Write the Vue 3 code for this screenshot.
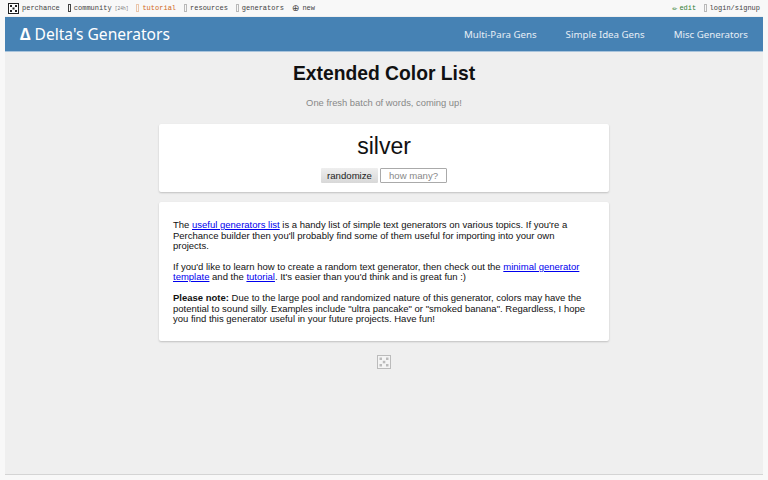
<script setup>
import { ref } from 'vue'

const leftLinks = [
  { text: 'community', extra: '[24h]', cls: 'strong' },
  { text: 'tutorial', cls: 'orange' },
  { text: 'resources' },
  { text: 'generators' }
]
const navLinks = ['Multi-Para Gens', 'Simple Idea Gens', 'Misc Generators']
const word = ref('silver')
</script>

<template>
  <div class="page">
    <div class="topbar">
      <div class="topbar__left">
        <a class="top-link top-link--logo">
          <svg class="logo" width="11" height="11" viewBox="0 0 11 11">
            <rect x="0.5" y="0.5" width="10" height="10" fill="#fff" stroke="#222" />
            <rect x="2" y="2" width="2" height="2" fill="#222" />
            <rect x="7" y="2" width="2" height="2" fill="#222" />
            <rect x="4.5" y="4.5" width="2" height="2" fill="#222" />
            <rect x="2" y="7" width="2" height="2" fill="#222" />
            <rect x="7" y="7" width="2" height="2" fill="#222" />
          </svg>
          perchance
        </a>
        <a v-for="link in leftLinks" :key="link.text" class="top-link" :class="link.cls">
          <span class="tofu"></span>{{ link.text }}
          <span v-if="link.extra" class="top-link__extra">{{ link.extra }}</span>
        </a>
        <a class="top-link"><span class="globe">⊕</span>new</a>
      </div>
      <div class="topbar__right">
        <a class="top-link green"><span class="pencil">✏</span>edit</a>
        <a class="top-link"><span class="tofu"></span>login/signup</a>
      </div>
    </div>

    <div class="frame">
      <nav class="nav">
        <a class="nav__brand"><b>Δ</b> Delta's Generators</a>
        <div class="nav__links">
          <a v-for="link in navLinks" :key="link">{{ link }}</a>
        </div>
      </nav>

      <h1 class="title">Extended Color List</h1>
      <p class="subtitle">One fresh batch of words, coming up!</p>

      <section class="card card--result">
        <div class="word">{{ word }}</div>
        <div class="controls">
          <button class="btn">randomize</button>
          <input class="count" placeholder="how many?">
        </div>
      </section>

      <section class="card card--text">
        <p>The <a href="#">useful generators list</a> is a handy list of simple text generators on various topics. If you're a Perchance builder then you'll probably find some of them useful for importing into your own projects.</p>
        <p>If you'd like to learn how to create a random text generator, then check out the <a href="#">minimal generator template</a> and the <a href="#">tutorial</a>. It's easier than you'd think and is great fun :)</p>
        <p><b>Please note:</b> Due to the large pool and randomized nature of this generator, colors may have the potential to sound silly. Examples include "ultra pancake" or "smoked banana". Regardless, I hope you find this generator useful in your future projects. Have fun!</p>
      </section>

      <svg class="dice" width="14" height="14" viewBox="0 0 14 14">
        <rect x="0.5" y="0.5" width="13" height="13" fill="#f4f4f4" stroke="#bbb" />
        <rect x="2.5" y="2.5" width="2.5" height="2.5" fill="#bbb" />
        <rect x="9" y="2.5" width="2.5" height="2.5" fill="#bbb" />
        <rect x="5.8" y="5.8" width="2.5" height="2.5" fill="#bbb" />
        <rect x="2.5" y="9" width="2.5" height="2.5" fill="#bbb" />
        <rect x="9" y="9" width="2.5" height="2.5" fill="#bbb" />
      </svg>
    </div>
  </div>
</template>

<style>
html, body {
  margin: 0;
  background: #f8f8f8;
}
</style>

<style scoped>
.page {
  height: 480px;
  overflow: hidden;
  background: #f8f8f8;
  font-family: "Liberation Sans", Arial, sans-serif;
}

.topbar {
  height: 16px;
  display: flex;
  justify-content: space-between;
  align-items: center;
  padding: 0 8px;
  font-family: "Liberation Mono", monospace;
  font-size: 7px;
  color: #444;
}

.topbar__left, .topbar__right {
  display: flex;
  align-items: center;
  gap: 8px;
}

.topbar__right {
  gap: 7.4px;
}

.top-link {
  display: flex;
  align-items: center;
}

.top-link--logo .logo {
  margin-right: 3px;
}

.top-link__extra {
  font-size: 4.6px;
  margin-left: 3px;
  color: #777;
}

.tofu {
  display: inline-block;
  width: 1px;
  height: 6px;
  margin-right: 3px;
  border: 1px solid currentColor;
  box-sizing: content-box;
  opacity: 0.35;
}

.strong .tofu {
  opacity: 1;
}

.globe {
  font-family: "DejaVu Sans", sans-serif;
  font-size: 9px;
  line-height: 9px;
  margin-right: 3px;
}

.pencil {
  font-family: "DejaVu Sans", sans-serif;
  font-size: 6px;
  margin-right: 2px;
}

.orange {
  color: #d2691e;
}

.green {
  color: #2e7d32;
}

.frame {
  margin: 0 5px;
  height: 459px;
  box-sizing: border-box;
  background: #efefef;
  border-bottom: 1px solid #d4d4d4;
  display: flex;
  flex-direction: column;
  align-items: center;
}

.nav {
  align-self: stretch;
  height: 35px;
  margin-top: 1px;
  flex-shrink: 0;
  box-sizing: border-box;
  background: #4682b4;
  border-bottom: 1px solid #a9c4dc;
  display: flex;
  justify-content: space-between;
  align-items: center;
  padding: 0 15px;
  color: #fff;
  font-family: "Noto Sans", "Open Sans", sans-serif;
}

.nav__brand {
  font-size: 15.6px;
}

.nav__links {
  display: flex;
  gap: 29px;
  font-size: 9.7px;
  color: #e6eef6;
}

.title {
  margin: 10px 0 0;
  font-size: 19.3px;
  line-height: 23px;
  font-weight: bold;
  color: #111;
}

.subtitle {
  margin: 12px 0 0;
  font-size: 9.4px;
  line-height: 12px;
  color: #888;
}

.card {
  width: 450px;
  box-sizing: border-box;
  background: #fff;
  border-radius: 2px;
  box-shadow: 0 1px 2px rgba(0, 0, 0, 0.2);
}

.card--result {
  margin-top: 15px;
  height: 68px;
  display: flex;
  flex-direction: column;
  align-items: center;
  padding-top: 9px;
}

.word {
  font-size: 23px;
  line-height: 26px;
  color: #111;
}

.controls {
  display: flex;
  gap: 2px;
  margin-top: 9px;
}

.btn {
  width: 57px;
  height: 15px;
  padding: 0;
  border: none;
  border-radius: 1px;
  background: linear-gradient(#eee, #d8d8d8);
  font-family: inherit;
  font-size: 9.6px;
  color: #222;
}

.count {
  width: 67px;
  height: 15px;
  padding: 0;
  box-sizing: border-box;
  border: 1px solid #aaa;
  border-radius: 1px;
  text-align: center;
  font-family: inherit;
  font-size: 9.6px;
  outline: none;
}

.count::placeholder {
  color: #888;
}

.card--text {
  margin-top: 10px;
  height: 139px;
  padding: 18px 20px 0 14px;
  font-size: 9.5px;
  line-height: 10.6px;
  color: #111;
}

.card--text p {
  margin: 0 0 10px;
}

.card--text a {
  color: #0000ee;
  text-decoration: underline;
}

.dice {
  margin-top: 14px;
}
</style>
